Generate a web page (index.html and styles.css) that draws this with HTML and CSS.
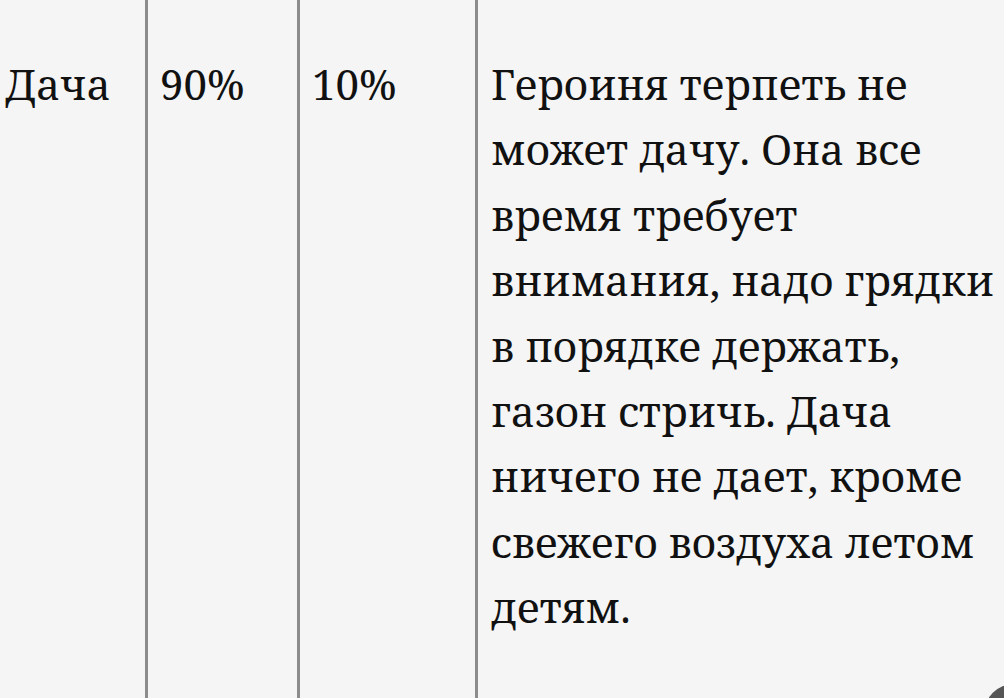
FILE: index.html
```html
<!DOCTYPE html>
<html lang="ru">
<head>
<meta charset="utf-8">
<link rel="stylesheet" href="styles.css">
</head>
<body>
<div class="table">
  <div class="cell c1">Дача</div>
  <div class="cell c2">90%</div>
  <div class="cell c3">10%</div>
  <div class="cell c4">Героиня терпеть не может дачу. Она все время требует внимания, надо грядки в порядке держать, газон стричь. Дача ничего не дает, кроме свежего воздуха летом детям.</div>
</div>
<div class="fab"></div>
</body>
</html>
```
FILE: styles.css
```css
html, body {
  margin: 0;
  padding: 0;
  background: #f5f5f5;
  height: 100%;
  overflow: hidden;
}
body {
  font-family: "Noto Serif", "DejaVu Serif", serif;
  font-size: 42px;
  font-weight: 400;
  line-height: 65.4px;
  color: #111;
}
.table {
  display: flex;
  height: 698px;
  overflow: hidden;
}
.cell {
  padding: 51px 12px 0 12px;
  box-sizing: border-box;
}
.c1 {
  width: 145px;
  padding-left: 5px;
}
.c2 {
  width: 152px;
  border-left: 3px solid #8c8c8c;
}
.c3 {
  width: 178px;
  border-left: 3px solid #8c8c8c;
}
.c4 {
  flex: 1;
  border-left: 3px solid #8c8c8c;
  padding-left: 13px;
  padding-right: 0;
}
.fab {
  position: fixed;
  left: 984px;
  top: 684px;
  width: 60px;
  height: 60px;
  border-radius: 50%;
  background: #555;
}
```
